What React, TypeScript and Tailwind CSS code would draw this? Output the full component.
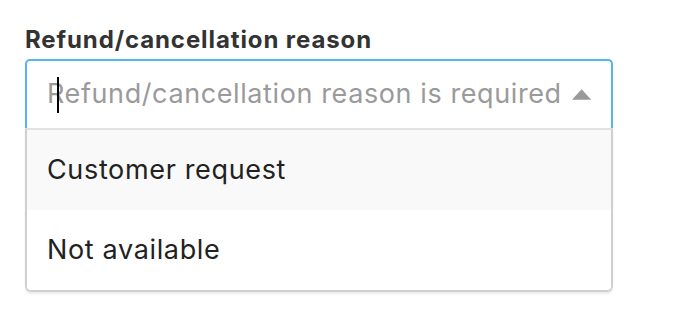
import { useState } from "react";

const reasons = ["Customer request", "Not available"];

export default function App() {
  const [open] = useState(true);

  return (
    <div className="w-[674px] h-[326px] bg-white pl-[25px] pt-[26px] font-['Inter',sans-serif]">
      <label className="block text-[24px] leading-[28px] font-bold text-[#333333] tracking-[0.9px]">
        Refund/cancellation reason
      </label>
      <div className="w-[588px] mt-[5px]">
        <div className="relative flex items-center h-[69px] border-2 border-b-0 border-[#55b5ee] rounded-t-[5px] pl-[20px] pr-[20px]">
          <span className="absolute left-[30px] top-[16px] w-[2px] h-[36px] bg-black" />
          <span className="flex-1 text-[27px] text-[#9a9a9a] whitespace-nowrap tracking-[0.6px]">
            Refund/cancellation reason is required
          </span>
          <svg width="20" height="11" viewBox="0 0 20 11" className="ml-[10px]">
            <path d="M0 11 L10 0 L20 11 Z" fill="#999999" />
          </svg>
        </div>
        {open && (
          <ul className="border-2 border-t-2 border-[#cfcfcf] border-t-[#e2e2e2] rounded-b-[6px] shadow-[0_2px_2px_rgba(0,0,0,0.08)] overflow-hidden">
            {reasons.map((r, i) => (
              <li
                key={r}
                className={`flex items-center h-[80px] pl-[20px] text-[27px] text-[#222222] tracking-[0.65px] ${i === 0 ? "bg-[#f9f9f9]" : "bg-white"}`}
              >
                {r}
              </li>
            ))}
          </ul>
        )}
      </div>
    </div>
  );
}
